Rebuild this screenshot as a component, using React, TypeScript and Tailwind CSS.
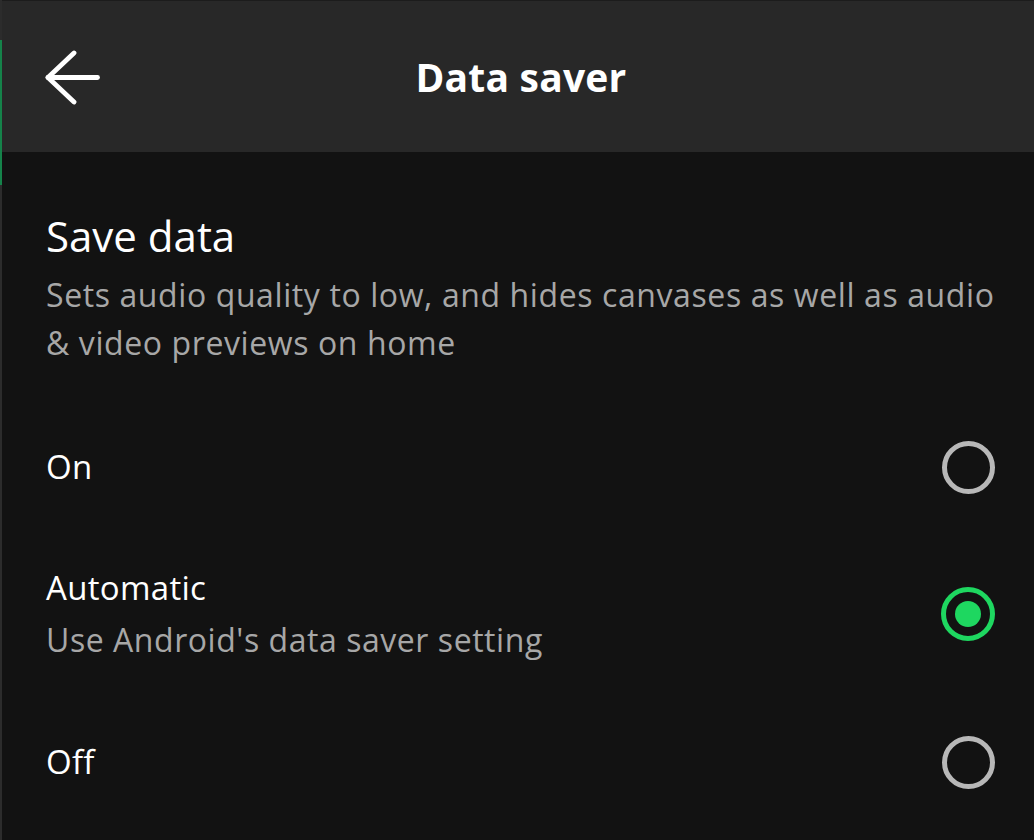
import React from "react";

function Radio({ selected }: { selected?: boolean }) {
  if (selected) {
    return (
      <div className="flex h-[54px] w-[54px] shrink-0 items-center justify-center rounded-full border-[5px] border-[#1ed760]">
        <div className="h-[26px] w-[26px] rounded-full bg-[#1ed760]" />
      </div>
    );
  }
  return <div className="h-[53px] w-[53px] shrink-0 rounded-full border-[5px] border-[#b8b8b8]" />;
}

export default function App() {
  return (
    <div className="relative flex h-[840px] w-[1034px] flex-col overflow-hidden bg-[#121212] font-['Open_Sans',sans-serif] text-white">
      {/* left edge strip */}
      <div className="absolute left-0 top-0 h-full w-[2px] bg-[#2c2c2c]">
        <div className="mt-[40px] h-[145px] w-full bg-[#15834a]" />
      </div>

      {/* Header */}
      <header className="grid h-[152px] shrink-0 grid-cols-[1fr_auto_1fr] items-center border-t border-[#1c1c1c] bg-[#282828]">
        <div className="flex items-center pl-[45px]">
          <svg width="56" height="56" viewBox="0 0 56 56" fill="none" stroke="white" strokeWidth="4.8" strokeLinecap="round" strokeLinejoin="round">
            <path d="M3 28.5 H52.5" />
            <path d="M29 4 L3 28.5 L29 53" />
          </svg>
        </div>
        <h1 className="pl-2 text-[39px] font-bold leading-[48px] tracking-[0.2px]">Data saver</h1>
        <div />
      </header>

      {/* Body */}
      <main className="flex flex-col pl-[46px] pr-[39px] pt-[59px]">
        <h2 className="text-[42px] leading-[50px] text-white">Save data</h2>
        <p className="mt-[10px] text-[32px] leading-[48px] tracking-[0.6px] text-[#a7a7a7]">
          Sets audio quality to low, and hides canvases as well as audio &amp; video previews on home
        </p>

        <div className="mt-[27px] flex flex-col">
          <div className="flex h-[146px] items-center justify-between">
            <span className="text-[33px] leading-[44px] tracking-[0.3px]">On</span>
            <Radio />
          </div>
          <div className="flex h-[148px] items-center justify-between">
            <div className="flex flex-col">
              <span className="text-[33px] leading-[44px] tracking-[0.3px]">Automatic</span>
              <span className="mt-2 text-[32px] leading-[44px] tracking-[0.55px] text-[#a7a7a7]">
                Use Android&apos;s data saver setting
              </span>
            </div>
            <Radio selected />
          </div>
          <div className="flex h-[148px] items-center justify-between">
            <span className="text-[33px] leading-[44px] tracking-[0.3px]">Off</span>
            <Radio />
          </div>
        </div>
      </main>
    </div>
  );
}
